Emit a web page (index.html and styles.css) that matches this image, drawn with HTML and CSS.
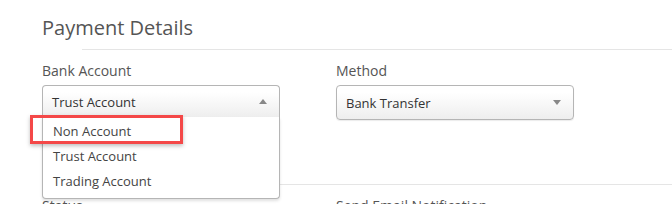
FILE: index.html
```html
<!DOCTYPE html>
<html lang="en-US">
<head>
<title>Payment Details</title>
<link rel="stylesheet" href="styles.css">
</head>
<body>
<div class="panel">
  <h3 class="title">Payment Details</h3>
  <div class="rule"></div>

  <div class="row">
    <div class="field">
      <label>Bank Account</label>
      <div class="select open">
        <div class="select-head">
          <span>Trust Account</span>
          <span class="caret up"></span>
        </div>
        <ul class="options">
          <li>Non Account</li>
          <li>Trust Account</li>
          <li>Trading Account</li>
        </ul>
        <div class="highlight"></div>
      </div>
    </div>
    <div class="field">
      <label>Method</label>
      <div class="select">
        <div class="select-head tall">
          <span>Bank Transfer</span>
          <span class="caret"></span>
        </div>
      </div>
    </div>
  </div>

  <div class="rule full"></div>
  <div class="row">
    <div class="field"><label>Status</label></div>
    <div class="field"><label>Send Email Notification</label></div>
  </div>
</div>
</body>
</html>
```

FILE: styles.css
```css
body {
  margin: 0;
  background: #fff;
  font-family: "Open Sans", "Liberation Sans", sans-serif;
  color: #555;
}
.panel {
  padding: 14px 0 40px 42px;
}
.title {
  margin: 0;
  font-size: 20px;
  font-weight: normal;
  line-height: 28px;
  color: #555;
}
.rule {
  height: 1px;
  background: #e5e5e5;
  margin: 7px 0 0 40px;
}
.rule.full {
  margin: 64px 0 0 0;
}
.row {
  display: grid;
  grid-template-columns: 238px 238px;
  column-gap: 56px;
}
.field label {
  display: block;
  font-size: 14px;
  line-height: 20px;
  margin: 11px 0 4px;
  color: #555;
}
.select {
  position: relative;
}
.select-head {
  display: flex;
  align-items: center;
  justify-content: space-between;
  height: 31px;
  padding: 0 12px 0 9px;
  border: 1px solid #b5b5b5;
  border-radius: 4px;
  background: linear-gradient(#fff 20%, #eee 100%);
  font-size: 13px;
  color: #333;
}
.select-head.tall {
  height: 33px;
  box-shadow: 0 1px 1px rgba(0,0,0,0.08);
}
.select.open .select-head {
  border-bottom-left-radius: 0;
  border-bottom-right-radius: 0;
  border-bottom-color: #e8e8e8;
}
.caret {
  width: 0;
  height: 0;
  border-left: 4px solid transparent;
  border-right: 4px solid transparent;
  border-top: 5px solid #888;
}
.caret.up {
  border-top: none;
  border-bottom: 5px solid #888;
}
.options {
  position: absolute;
  left: 0;
  right: 0;
  top: 32px;
  z-index: 2;
  margin: 0;
  padding: 2px 0 4px;
  list-style: none;
  background: #fff;
  border: 1px solid #b5b5b5;
  border-top: none;
  border-radius: 0 0 4px 4px;
  box-shadow: 0 2px 3px rgba(0,0,0,0.12);
}
.options li {
  font-size: 13px;
  line-height: 25px;
  padding-left: 10px;
  color: #444;
}
.highlight {
  position: absolute;
  z-index: 3;
  left: -12px;
  top: 30px;
  width: 147px;
  height: 23px;
  border: 3px solid #f44848;
  box-shadow: 0 2px 4px rgba(0,0,0,0.25);
}
```
